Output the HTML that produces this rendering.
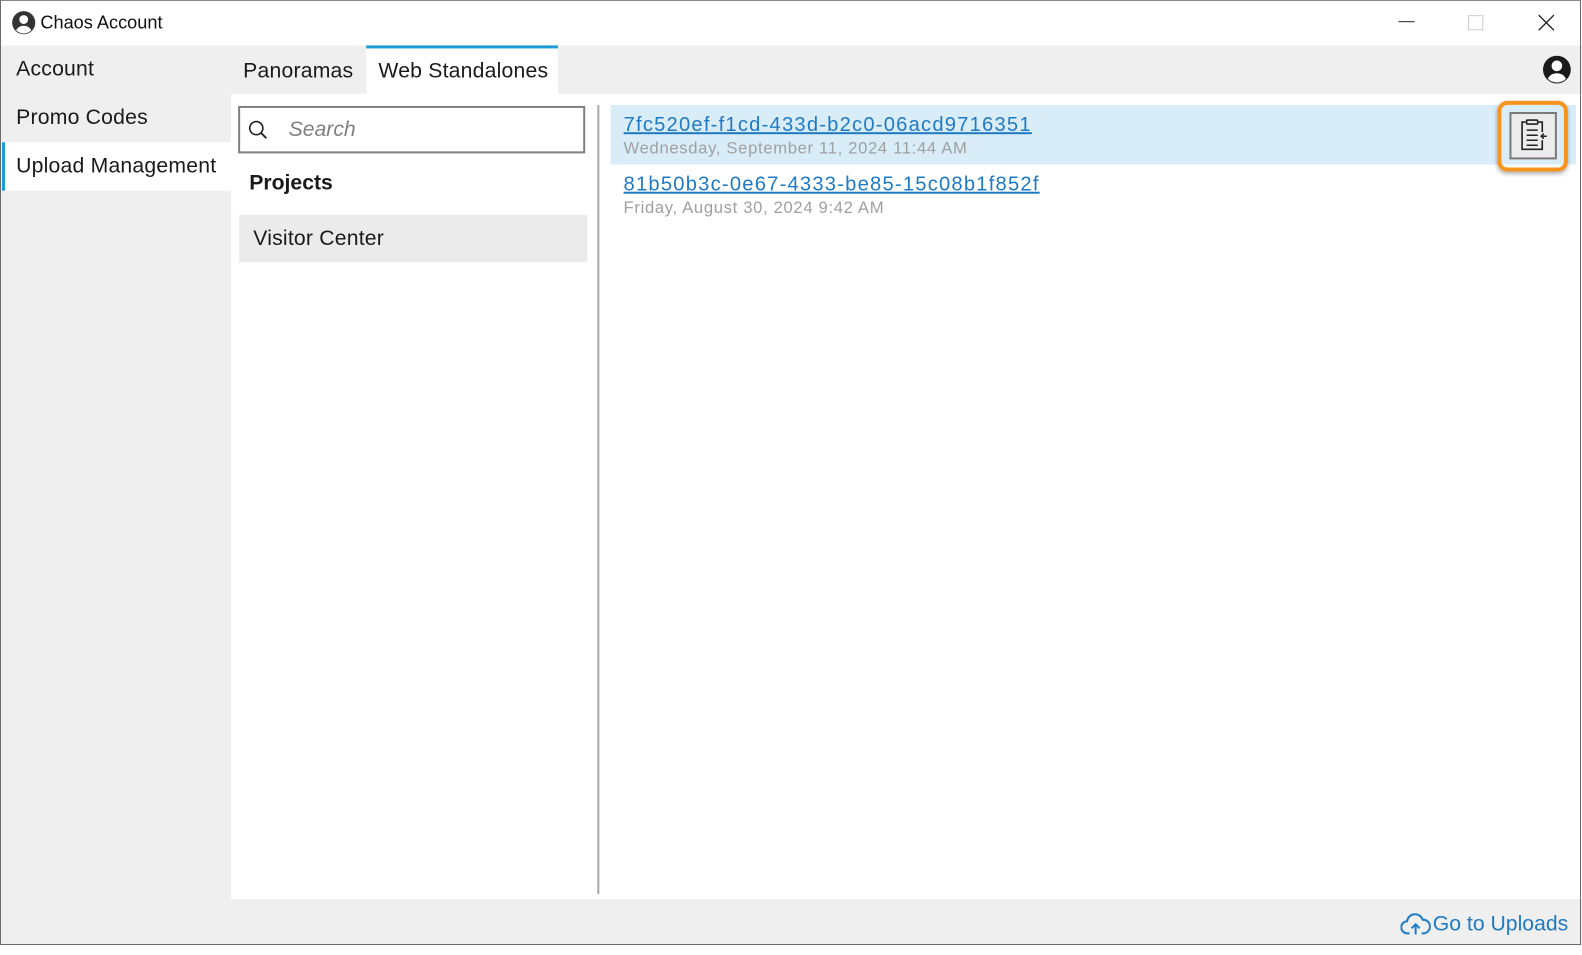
<!DOCTYPE html>
<html><head><meta charset="utf-8"><style>
*{box-sizing:border-box;margin:0;padding:0}
body{width:1582px;height:946px;background:#fff;font-family:"Liberation Sans",sans-serif;position:relative;overflow:hidden;color:#1a1a1a}
.abs{position:absolute}
#w{position:absolute;left:0;top:0;width:1582px;height:946px;transform:scale(1.009);transform-origin:0 0;overflow:hidden}
.nav{font-size:21px;letter-spacing:.2px}
</style></head><body>
<div id="w">
<svg class="abs" style="left:11px;top:10px" width="25" height="25" viewBox="0 0 24 24"><circle cx="12" cy="12" r="11" fill="#333"/><circle cx="12" cy="9" r="4.2" fill="#fff"/><path d="M4.8 19.2c1.6-3 4.2-4.3 7.2-4.3s5.6 1.3 7.2 4.3A10 10 0 0 1 4.8 19.2z" fill="#fff"/></svg>
<div class="abs" style="left:40px;top:12px;font-size:18px;color:#111">Chaos Account</div>
<div class="abs" style="left:1386px;top:21px;width:16px;height:1px;background:#222"></div>
<div class="abs" style="left:1455px;top:15px;width:15px;height:15px;border:1px solid #ccc"></div>
<svg class="abs" style="left:1524px;top:14px" width="17" height="17"><path d="M1 1L16 16M16 1L1 16" stroke="#222" stroke-width="1.3"/></svg>
<div class="abs" style="left:1px;top:45px;width:1579px;height:892px;background:#efefef"></div>
<div class="abs" style="left:2px;top:141px;width:227px;height:48px;background:#fff"></div>
<div class="abs" style="left:2px;top:141px;width:3px;height:48px;background:#1e9ad6"></div>
<div class="abs nav" style="left:16px;top:57px">Account</div>
<div class="abs nav" style="left:16px;top:105px">Promo Codes</div>
<div class="abs nav" style="left:16px;top:153px">Upload Management</div>
<div class="abs nav" style="left:241px;top:59px">Panoramas</div>
<div class="abs" style="left:363px;top:45px;width:190px;height:48px;background:#fff;border-top:3px solid #1e9ad6"></div>
<div class="abs nav" style="left:375px;top:59px">Web Standalones</div>
<svg class="abs" style="left:1528px;top:54px" width="30" height="30" viewBox="0 0 24 24"><circle cx="12" cy="12" r="11" fill="#1a1a1a"/><circle cx="12" cy="9" r="4.2" fill="#fff"/><path d="M4.8 19.2c1.6-3 4.2-4.3 7.2-4.3s5.6 1.3 7.2 4.3A10 10 0 0 1 4.8 19.2z" fill="#fff"/></svg>
<div class="abs" style="left:229px;top:93px;width:1351px;height:798px;background:#fff"></div>
<div class="abs" style="left:236px;top:105px;width:344px;height:47px;border:2px solid #808080"></div>
<svg class="abs" style="left:245px;top:118px" width="22" height="22"><circle cx="9" cy="9" r="6.5" stroke="#222" stroke-width="1.6" fill="none"/><path d="M14 14l5 5" stroke="#222" stroke-width="1.8"/></svg>
<div class="abs" style="left:286px;top:117px;font-size:21px;font-style:italic;color:#808080">Search</div>
<div class="abs" style="left:247px;top:170px;font-size:21px;font-weight:bold">Projects</div>
<div class="abs" style="left:237px;top:213px;width:345px;height:47px;background:#ebebeb"></div>
<div class="abs nav" style="left:251px;top:225px">Visitor Center</div>
<div class="abs" style="left:592px;top:104px;width:2px;height:782px;background:#a8a8a8"></div>
<div class="abs" style="left:605px;top:104px;width:957px;height:59px;background:#d9edf8"></div>
<div class="abs" style="left:618px;top:113px;font-size:20px;letter-spacing:1.2px;color:#1f7ac4;text-decoration:underline">7fc520ef-f1cd-433d-b2c0-06acd9716351</div>
<div class="abs" style="left:618px;top:138px;font-size:16.5px;letter-spacing:.65px;color:#a0a0a0">Wednesday, September 11, 2024 11:44 AM</div>
<div class="abs" style="left:618px;top:172px;font-size:20px;letter-spacing:1.2px;color:#1f7ac4;text-decoration:underline">81b50b3c-0e67-4333-be85-15c08b1f852f</div>
<div class="abs" style="left:618px;top:197px;font-size:16.5px;letter-spacing:.65px;color:#a0a0a0">Friday, August 30, 2024 9:42 AM</div>
<div class="abs" style="left:1484px;top:100px;width:70px;height:70px;border:4px solid #f7941d;border-radius:10px;box-shadow:0 2px 4px rgba(0,0,0,.3)"></div>
<div class="abs" style="left:1496px;top:111px;width:47px;height:47px;background:#ececec;border:2px solid #7a7a7a"></div>
<svg class="abs" style="left:1505px;top:116px" width="30" height="36" viewBox="0 0 30 36"><path d="M7 5H3.5v27h20V23M23.5 15V5H20" stroke="#222" stroke-width="1.6" fill="none"/><rect x="8" y="3" width="11" height="4" rx="1" stroke="#222" stroke-width="1.6" fill="#ececec"/><path d="M8 13h11M8 18h11M8 23h11M8 28h11M28 19h-5M25 16.5l-2.5 2.5 2.5 2.5" stroke="#222" stroke-width="1.5" fill="none"/></svg>
<svg class="abs" style="left:1388px;top:905px" width="30" height="22" viewBox="0 0 30 22"><path d="M9 20H7a6 6 0 0 1-.5-12A8 8 0 0 1 22 6.5a6.5 6.5 0 0 1 1 13.5h-2" stroke="#1f7ac4" stroke-width="2" fill="none"/><path d="M15 21V11M11 15l4-4 4 4" stroke="#1f7ac4" stroke-width="2" fill="none"/></svg>
<div class="abs" style="left:1420px;top:904px;font-size:21px;color:#1f7ac4">Go to Uploads</div>
</div>
<div class="abs" style="left:0;top:0;width:1581px;height:945px;border:1px solid #6b6b6b;border-top-color:#888"></div>
</body></html>
